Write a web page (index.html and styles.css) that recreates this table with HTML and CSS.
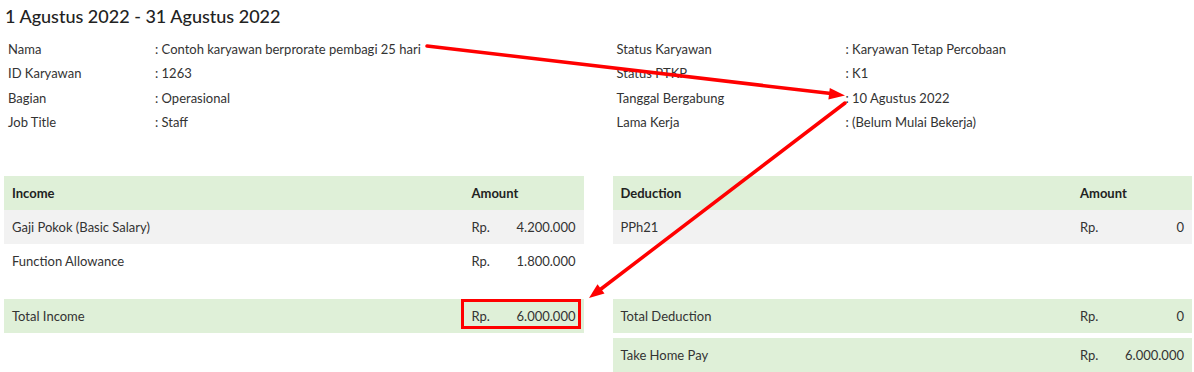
FILE: index.html
```html
<!DOCTYPE html>
<html lang="id">
<head>
<meta charset="utf-8">
<title>Slip Gaji</title>
<link rel="stylesheet" href="styles.css">
</head>
<body>
<div class="page">
  <h1 class="title">1 Agustus 2022 - 31 Agustus 2022</h1>

  <div class="info">
    <div class="info-col">
      <div class="info-row"><span class="lbl">Nama</span><span class="val">: Contoh karyawan berprorate pembagi 25 hari</span></div>
      <div class="info-row"><span class="lbl">ID Karyawan</span><span class="val">: 1263</span></div>
      <div class="info-row"><span class="lbl">Bagian</span><span class="val">: Operasional</span></div>
      <div class="info-row"><span class="lbl">Job Title</span><span class="val">: Staff</span></div>
    </div>
    <div class="info-col right">
      <div class="info-row"><span class="lbl">Status Karyawan</span><span class="val">: Karyawan Tetap Percobaan</span></div>
      <div class="info-row"><span class="lbl">Status PTKP</span><span class="val">: K1</span></div>
      <div class="info-row"><span class="lbl">Tanggal Bergabung</span><span class="val">: 10 Agustus 2022</span></div>
      <div class="info-row"><span class="lbl">Lama Kerja</span><span class="val">: (Belum Mulai Bekerja)</span></div>
    </div>
  </div>

  <div class="tables">
    <div class="items">
      <div class="row head"><span class="name">Income</span><span class="amt">Amount</span></div>
      <div class="row gray"><span class="name">Gaji Pokok (Basic Salary)</span><span class="amt"><span>Rp.</span><span>4.200.000</span></span></div>
      <div class="row"><span class="name">Function Allowance</span><span class="amt"><span>Rp.</span><span>1.800.000</span></span></div>
    </div>
    <div class="items">
      <div class="row head"><span class="name">Deduction</span><span class="amt">Amount</span></div>
      <div class="row gray"><span class="name">PPh21</span><span class="amt"><span>Rp.</span><span>0</span></span></div>
    </div>
    <div class="totals">
      <div class="row green"><span class="name">Total Income</span><span class="amt"><span>Rp.</span><span>6.000.000</span></span></div>
    </div>
    <div class="totals">
      <div class="row green"><span class="name">Total Deduction</span><span class="amt"><span>Rp.</span><span>0</span></span></div>
      <div class="row green"><span class="name">Take Home Pay</span><span class="amt"><span>Rp.</span><span>6.000.000</span></span></div>
    </div>
  </div>
</div>

<svg class="marks" width="1194" height="372" viewBox="0 0 1194 372" aria-hidden="true">
  <line x1="427" y1="46" x2="831" y2="93.5" stroke="#f00" stroke-width="3.5" stroke-linecap="round"/>
  <polygon points="845,95.5 829.8,88 828.4,99.5" fill="#f00"/>
  <line x1="845" y1="103" x2="601" y2="289" stroke="#f00" stroke-width="3.5" stroke-linecap="round"/>
  <polygon points="589,298 604.5,293.5 597.5,284.3" fill="#f00"/>
  <rect x="462.5" y="300.5" width="117" height="27" fill="none" stroke="#f00" stroke-width="3"/>
</svg>
</body>
</html>
```

FILE: styles.css
```css
* { box-sizing: border-box; }
html, body { margin: 0; padding: 0; background: #fff; }
body {
  position: relative;
  width: 1194px;
  height: 372px;
  overflow: hidden;
  font-family: Lato, "Open Sans", "Liberation Sans", sans-serif;
  font-size: 13px;
  color: #333;
}
.page { padding: 0 2px 0 4px; }
.title {
  margin: 0;
  padding: 2px 0 0 1px;
  font-size: 18px;
  font-weight: 500;
  line-height: 28px;
  color: #222;
}
.info {
  margin-top: 7px;
  display: grid;
  grid-template-columns: 1fr 1fr;
  column-gap: 29px;
}
.info-col { padding-left: 4px; }
.info-row { display: flex; height: 24.4px; line-height: 24.4px; white-space: nowrap; }
.info-col .lbl { width: 147px; flex: none; }
.info-col.right .lbl { width: 229px; }
.tables {
  margin-top: 41.5px;
  display: grid;
  grid-template-columns: 1fr 1fr;
  column-gap: 29px;
  row-gap: 21px;
}
.items { min-height: 102px; }
.totals { display: flex; flex-direction: column; gap: 5px; }
.row {
  display: flex;
  height: 34px;
  align-items: center;
  background: #fff;
}
.row.head { background: #dff0d8; font-weight: 700; color: #222; }
.row.gray { background: #f2f2f2; }
.row.green { background: #dff0d8; }
.name { flex: 1; padding-left: 8px; }
.amt {
  width: 120px;
  flex: none;
  padding: 0 8px;
  display: flex;
  justify-content: space-between;
}
.marks { position: absolute; left: 0; top: 0; pointer-events: none; }
```
